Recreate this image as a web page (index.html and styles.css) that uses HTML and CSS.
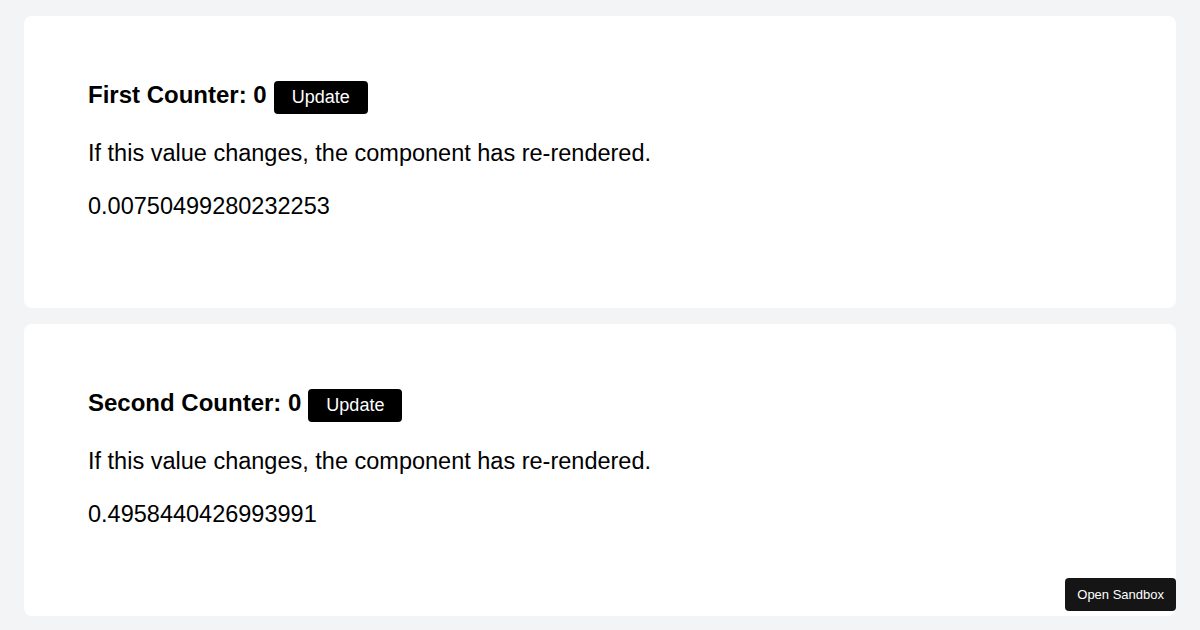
FILE: index.html
```html
<!DOCTYPE html>
<html lang="en">
<head>
  <meta charset="UTF-8">
  <meta name="viewport" content="width=device-width, initial-scale=1.0">
  <title>Counters</title>
  <link rel="stylesheet" href="styles.css">
</head>
<body>
  <div class="counter-card">
    <div class="counter-head">
      <h2>First Counter: 0</h2>
      <button class="update-btn">Update</button>
    </div>
    <p>If this value changes, the component has re-rendered.</p>
    <p>0.00750499280232253</p>
  </div>

  <div class="counter-card">
    <div class="counter-head">
      <h2>Second Counter: 0</h2>
      <button class="update-btn">Update</button>
    </div>
    <p>If this value changes, the component has re-rendered.</p>
    <p>0.4958440426993991</p>
  </div>

  <a class="open-sandbox" href="#">Open Sandbox</a>
</body>
</html>
```

FILE: styles.css
```css
body {
  margin: 0;
  padding: 16px 24px 14px;
  background: #f3f4f6;
  font-family: "Liberation Sans", Arial, sans-serif;
  color: #000;
  display: flex;
  flex-direction: column;
  gap: 16px;
}
.counter-card {
  background: #fff;
  border-radius: 8px;
  padding: 64px 64px 63px;
}
.counter-head {
  display: flex;
  align-items: baseline;
  gap: 7px;
  padding-top: 1px;
}
.counter-head h2 {
  margin: 0;
  font-size: 24px;
  font-weight: bold;
}
.update-btn {
  font-family: inherit;
  font-size: 18px;
  line-height: 21px;
  color: #fff;
  background: #000;
  border: none;
  border-radius: 4px;
  padding: 6px 18px;
  cursor: pointer;
}
.counter-card p {
  margin: 26px 0 25px;
  font-size: 23.5px;
  line-height: 27px;
}
.open-sandbox {
  position: fixed;
  right: 24px;
  bottom: 19px;
  background: #151515;
  color: #fff;
  font-size: 13px;
  line-height: 15px;
  padding: 9px 12px;
  border-radius: 4px;
  text-decoration: none;
}
```
